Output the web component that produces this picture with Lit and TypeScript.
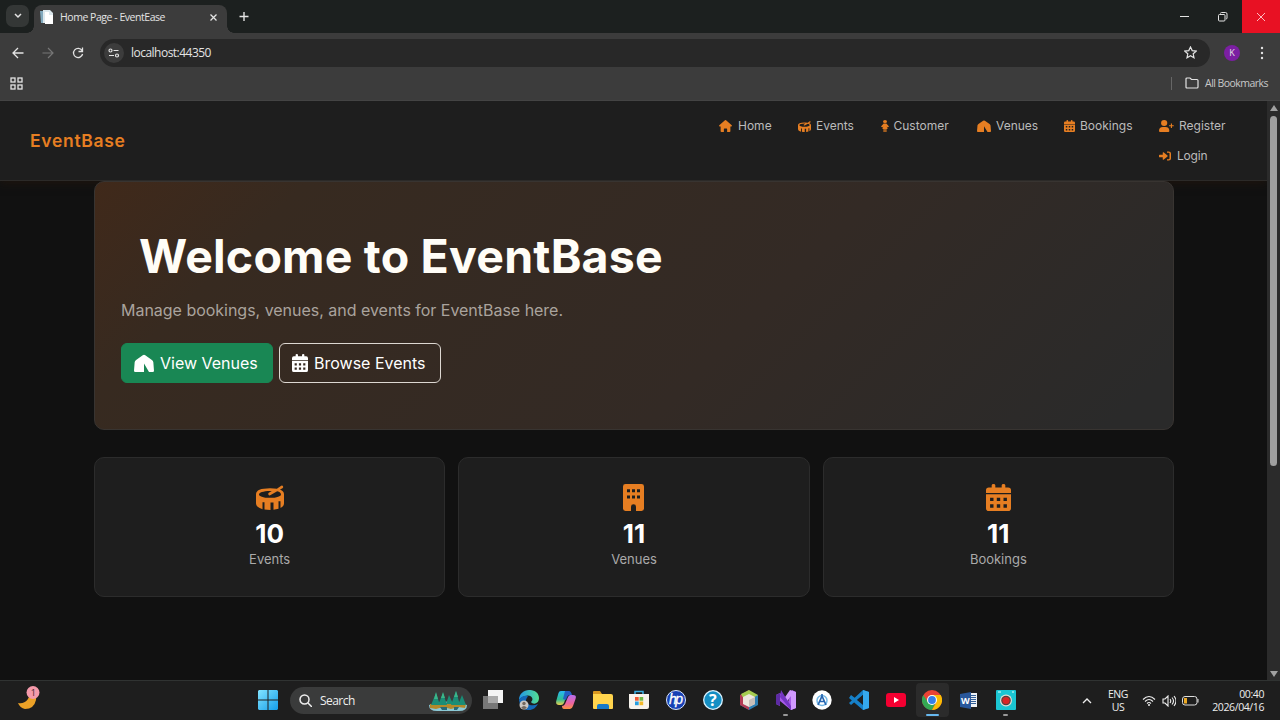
import { LitElement, html, svg, css } from "lit";
import { customElement } from "lit/decorators.js";

const calendar = svg`<path fill-rule="evenodd" d="M5 1q0-1 1.600-1t1.600 1v2h5.600V1q0-1 1.600-1T17 1v2h2.500Q22 3 22 5.500V8H0V5.500Q0 3 2.500 3H5zM0 9h22v12.500q0 2.500-2.500 2.500h-17Q0 24 0 21.500zM3.600 12.200v3h3v-3zM9.500 12.200v3h3v-3zM15.400 12.200v3h3v-3zM3.600 18v3h3v-3zM9.500 18v3h3v-3zM15.400 18v3h3v-3z"/>`;
const tent = svg`<path d="M10.500 1.400q1.500-1 3 0l8 5.900Q23 8.500 23.200 10L24 20.500q0 1.500-1.500 1.500H18L12 11.500V22H1.500Q0 22 0 20.500L.8 10Q1 8.500 2.500 7.300z"/>`;
const drum = svg`<path fill-rule="evenodd" d="M27 1.200a1.300 1.300 0 0 1-.5 1.800l-2.500 1.300q4 1.700 4 4.500v9q0 2.700-3.500 4.300v-6.500h-2v7.300q-2.500.7-5 .9v-7h-3v7.200q-3.500 0-6-.4v-7h-2v6.600Q0 21.500 0 17.800v-9Q0 3 14 3q4 0 6.900.6L25.200.800a1.300 1.300 0 0 1 1.800.4zM14 5.700c-7 0-11 1.700-11 3.300s4 3.300 11 3.300S25 10.600 25 9c0-1.200-1.300-2.200-3.800-2.900l-7 3.800a1.400 1.400 0 0 1-1.400-2.400l3-1.700z"/>`;
const icons: Record<string, [string, unknown]> = {
  home: ["0 0 24 22", svg`<path fill-rule="evenodd" d="M11 .5q1-.8 2 0l10.500 9.300q1 1.200-.5 2.200h-2v8.500q0 1.500-1.500 1.500H15v-5.500q0-1-1-1h-4q-1 0-1 1V22H4.500Q3 22 3 20.500V12H1q-1.500-1-.5-2.200z"/>`],
  drum: ["0 0 28 24", drum],
  person: ["0 0 12 24", svg`<circle cx="6" cy="3" r="3"/><path d="M4 7h4l4 6-2 2-1.500-2L10 18H8.200v6H6.500v-6h-1v6H3.800v-6H2l1.500-5L2 15l-2-2z"/>`],
  tent: ["0 0 24 22", tent],
  calendar: ["0 0 22 24", calendar],
  userplus: ["0 0 29 24", svg`<circle cx="10" cy="6" r="6"/><path d="M7.500 14h5q7.500 0 7.500 8 0 2-2 2H2q-2 0-2-2 0-8 7.500-8zM22.900 7h2.200v3.400h3.400v2.200h-3.400V16h-2.200v-3.400h-3.400v-2.200h3.400z"/>`],
  login: ["0 0 24 22", svg`<path d="M9 3l8 7q1 1 0 2l-8 7q-1.500.5-1.500-1v-4H1.500Q0 14 0 12.500v-3Q0 8 1.500 8h6V4q0-1.500 1.500-1zM16 1h3.500Q24 1 24 5.500v11q0 4.500-4.500 4.500H16v-3h3.500q1.500 0 1.500-1.500v-11Q21 4 19.500 4H16z"/>`],
  building: ["0 0 21 28", svg`<path fill-rule="evenodd" d="M2.500 0h16Q21 0 21 2.500v23q0 2.500-2.500 2.500H13v-4.500a2.500 2.500 0 0 0-5 0V28H2.500Q0 28 0 25.500v-23Q0 0 2.500 0zM4 5.500v3h3v-3zM9 5.500v3h3v-3zM14 5.500v3h3v-3zM4 12v3h3v-3zM9 12v3h3v-3zM14 12v3h3v-3z"/>`],
};
const icon = (name: string, w: number, h: number) =>
  html`<svg width=${w} height=${h} viewBox=${icons[name][0]} preserveAspectRatio="none" fill="currentColor">${icons[name][1]}</svg>`;

@customElement("browser-chrome")
class BrowserChrome extends LitElement {
  static styles = css`
    :host { display: block; height: 101px; font-family: "Open Sans", "Noto Sans", sans-serif; color: #e3e3e3; background: #3c3c3c; }
    svg { display: block; fill: none; stroke: currentColor; flex: none; }
    .strip { height: 33px; display: flex; background: #1c201f; }
    .search { width: 23px; height: 22px; margin: 5px 5px 0 6px; border-radius: 7px; background: #343736; display: grid; place-items: center; }
    .tab { width: 193px; height: 28px; margin-top: 5px; border-radius: 8px 8px 0 0; background: #3c3c3c; display: flex; align-items: center; box-sizing: border-box; padding: 0 10px 4px 6px; position: relative; }
    .tab::before, .tab::after { content: ""; position: absolute; bottom: 0; width: 7px; height: 7px; }
    .tab::before { left: -7px; background: radial-gradient(circle at 0 0, #0000 6.500px, #3c3c3c 7px); }
    .tab::after { right: -7px; background: radial-gradient(circle at 100% 0, #0000 6.500px, #3c3c3c 7px); }
    .title { margin-left: 6px; flex: 1; letter-spacing: -.51px; white-space: nowrap; font: 10.500px "Open Sans", sans-serif; letter-spacing: -.51px; letter-spacing: -.46px; }
    .plus { margin: 11px 0 0 12px; }
    .win { margin-left: auto; display: flex; }
    .win div { display: grid; place-items: center; width: 38px; height: 33px; }
    .win .close { background: #e81123; color: #ffb9bf; }
    .bar { height: 39px; display: flex; align-items: center; }
    .navs { display: flex; gap: 18px; width: 88px; padding-left: 12px; }
    .dim { color: #777; }
    .url { width: 1110px; height: 28px; border-radius: 14px; background: #282828; display: flex; align-items: center; font-size: 12px; box-sizing: border-box; padding: 0 13px 0 4px; letter-spacing: -.52px; }
    .site { width: 20px; height: 20px; border-radius: 50%; background: #3c3c3c; display: grid; place-items: center; margin-right: 7px; }
    .url span { flex: 1; }
    .avatar { width: 16px; height: 16px; border-radius: 50%; background: #7b1fa2; font-size: 9px; display: grid; place-items: center; margin-left: 14px; }
    .dots { margin-left: 20px; fill: currentColor; stroke: none; }
    .marks { height: 29px; border-bottom: 1px solid #444; display: flex; align-items: center; padding: 0 12px 6px 10px; box-sizing: border-box; font-size: 10.500px; }
    .line { width: 1px; height: 13px; background: #666; margin: 0 13px 0 auto; }
    .all { margin-left: 6px; letter-spacing: -.54px; color: #c8c8c8; }
  `;
  render() {
    return html`
      <div class="strip">
        <div class="search"><svg width="8" height="6" stroke-width="1.500"><path d="M1 1l3 3 3-3"/></svg></div>
        <div class="tab">
          <svg width="14" height="14" stroke="none"><path stroke="none" fill="#81a9bd" d="M0 1h4v12H1z"/><path stroke="none" fill="#dce8ed" d="M3 0h7l3 3v10H3z"/><path stroke="none" fill="#fff" d="M5 2h4v3h4v9H5z"/></svg>
          <span class="title">Home Page - EventEase</span>
          <svg width="7" height="7" stroke-width="1.300"><path d="M.5.500l6 6m0-6l-6 6"/></svg>
        </div>
        <svg class="plus" width="10" height="11" stroke-width="1.400"><path d="M5 1v9M.500 5.500h9"/></svg>
        <div class="win">
          <div><svg width="10" height="2"><path d="M0 .5h9"/></svg></div>
          <div><svg width="10" height="10"><rect x=".5" y="2.500" width="6.500" height="6.500" rx="1"/><path d="M2.500 1.500q0-1 1-1h4q1.500 0 1.500 1.500v4q0 1-1 1"/></svg></div>
          <div class="close"><svg width="10" height="10"><path d="M1 1l8 8m0-8l-8 8"/></svg></div>
        </div>
      </div>
      <div class="bar">
        <div class="navs">
          <svg width="12" height="12" stroke-width="1.300"><path d="M11.500 6h-10M6 1L1 6l5 5"/></svg>
          <svg class="dim" width="12" height="12" stroke-width="1.200"><path d="M.500 6h10M6 1l5 5-5 5"/></svg>
          <svg width="12" height="12" stroke-width="1.300"><path d="M10 3.500A4.600 4.600 0 1 0 10.600 7M10.500.500v4h-4"/></svg>
        </div>
        <div class="url">
          <div class="site"><svg width="12" height="10" stroke-width="1.200"><circle cx="2.500" cy="2.500" r="1.500"/><path d="M5.500 2.500h5M1 7.500h5"/><circle cx="9" cy="7.500" r="1.500"/></svg></div>
          <span>localhost:44350</span>
          <svg width="13" height="13" stroke-width="1.200"><path d="M6.500 1l1.700 3.600 4 .5-3 2.700.8 4-3.500-2-3.500 2 .8-4-3-2.700 4-.5z"/></svg>
        </div>
        <div class="avatar">K</div>
        <svg class="dots" width="4" height="14"><circle cx="2" cy="2" r="1.200"/><circle cx="2" cy="7" r="1.200"/><circle cx="2" cy="12" r="1.200"/></svg>
      </div>
      <div class="marks">
        <svg width="13" height="13" stroke-width="1.300"><rect x="1" y="1" width="4" height="4"/><rect x="8" y="1" width="4" height="4"/><rect x="1" y="8" width="4" height="4"/><rect x="8" y="8" width="4" height="4"/></svg>
        <div class="line"></div>
        <svg width="14" height="12" stroke-width="1.200"><path d="M1 2q0-1 1-1h3l1.500 1.500H12q1 0 1 1V10q0 1-1 1H2q-1 0-1-1z"/></svg>
        <span class="all">All Bookmarks</span>
      </div>`;
  }
}

const navItems = [
  { name: "home", label: "Home", col: 79, w: 13, h: 12, gap: 6 },
  { name: "drum", label: "Events", col: 82.500, w: 13, h: 11, gap: 5 },
  { name: "person", label: "Customer", col: 96.500, w: 8, h: 12, gap: 5 },
  { name: "tent", label: "Venues", col: 87, w: 14, h: 12, gap: 5 },
  { name: "calendar", label: "Bookings", col: 95, w: 11, h: 12, gap: 5 },
  { name: "userplus", label: "Register", col: 75, w: 15, h: 12, gap: 5 },
];
const stats = [
  { name: "drum", w: 28, h: 25, n: 10, label: "Events" },
  { name: "building", w: 21, h: 27, n: 11, label: "Venues" },
  { name: "calendar", w: 25, h: 27, n: 11, label: "Bookings" },
];

@customElement("event-page")
class EventPage extends LitElement {
  static styles = css`
    :host { display: flex; height: 579px; font-family: Inter, sans-serif; background: #111; overflow: hidden; }
    svg { display: block; flex: none; }
    .page { width: 1267px; }
    header { height: 80px; box-sizing: border-box; background: #1e1e1e; border-bottom: 1px solid #2c2a28; display: flex; justify-content: space-between; padding-left: 30px; box-shadow: 0 2px 9px #2b180a80; }
    .brand { color: #e67e22; font-size: 17.500px; font-weight: 600; align-self: center; letter-spacing: .7px; }
    nav { display: flex; flex-wrap: wrap; width: 548px; padding-top: 10px; color: #bbb; font-size: 12px; align-content: flex-start; }
    .item { height: 30px; display: flex; align-items: center; }
    .item svg { color: #e67e22; }
    .item span { margin-top: -1px; }
    .login { margin-left: 440px; letter-spacing: -.2px; }
    main { width: 1080px; margin-left: 94px; }
    .hero { height: 249px; box-sizing: border-box; border: 1px solid #383431; border-radius: 10px; background: linear-gradient(135deg, #40291a 0%, #372a20 16%, #332a25 60%, #2a2a2a 95%); padding: 45px 26px 0; }
    h1 { font-size: 46.500px; line-height: 58px; margin: 0 0 0 18px; color: #fffdf7; font-weight: 700; letter-spacing: .2px; }
    p { color: #aaa39d; font-size: 16px; line-height: 24px; margin: 13px 0 21px; letter-spacing: -.02px; }
    .actions { display: flex; gap: 6px; }
    .button { height: 40px; box-sizing: border-box; border: 1px solid #198754; border-radius: 6px; display: flex; align-items: center; color: #fff; font-size: 16px; white-space: nowrap; padding-left: 12px; gap: 6px; background: #198754; width: 152px; }
    .button span { margin-top: -1px; }
    .outline { width: 162px; background: none; border-color: #ddd8d2; }
    .stats { display: grid; grid-template-columns: repeat(3, 1fr); gap: 13px; margin-top: 27px; }
    .card { height: 140px; box-sizing: border-box; background: #1e1e1e; border: 1px solid #2c2c2c; border-radius: 10px; display: flex; flex-direction: column; align-items: center; color: #e67e22; padding-top: 25px; }
    .pic { height: 28px; display: grid; place-items: center; }
    .num { color: #fff; font-size: 26px; font-weight: 700; line-height: 32px; margin-top: 7px; }
    .cap { color: #aaa; font-size: 13px; line-height: 20px; margin-top: -1px; }
    .scroll { width: 13px; background: #2b2b2b; display: flex; flex-direction: column; align-items: center; padding: 4px 0 3px; box-sizing: border-box; color: #a0a0a0; }
    .thumb { width: 7px; height: 350px; border-radius: 4px; background: #9f9f9f; margin: 5px 0 auto; }
  `;
  render() {
    return html`
      <div class="page">
        <header>
          <div class="brand">EventBase</div>
          <nav>
            ${navItems.map((i) => html`<div class="item" style="width:${i.col}px;gap:${i.gap}px">${icon(i.name, i.w, i.h)}<span>${i.label}</span></div>`)}
            <div class="item login" style="gap:6px">${icon("login", 12, 10)}<span>Login</span></div>
          </nav>
        </header>
        <main>
          <section class="hero">
            <h1>Welcome to EventBase</h1>
            <p>Manage bookings, venues, and events for EventBase here.</p>
            <div class="actions">
              <div class="button">${icon("tent", 20, 18)}<span>View Venues</span></div>
              <div class="button outline">${icon("calendar", 16, 18)}<span>Browse Events</span></div>
            </div>
          </section>
          <section class="stats">
            ${stats.map((s) => html`<div class="card"><div class="pic">${icon(s.name, s.w, s.h)}</div><div class="num">${s.n}</div><div class="cap">${s.label}</div></div>`)}
          </section>
        </main>
      </div>
      <div class="scroll">
        <svg width="8" height="6" fill="currentColor"><path d="M4 0l4 6H0z"/></svg>
        <div class="thumb"></div>
        <svg width="8" height="6" fill="currentColor"><path d="M4 6l4-6H0z"/></svg>
      </div>`;
  }
}

const apps = [
  svg`<path fill="#f4f4f4" d="M5 0h15v13H5z"/><path fill="#777" d="M0 6h15v13H0z"/><path fill="#aaa" d="M5 6h10v7H5z"/>`,
  svg`<defs><linearGradient id="edge"><stop stop-color="#2197e8"/><stop offset="1" stop-color="#54df91"/></linearGradient></defs><path fill="url(#edge)" d="M0 10C0-3 20-3 20 8c0 6-6 7-8 4 4-4-1-8-6-6-3 1-5 2-6 4z"/><path fill="#1468b8" d="M0 10Q3 5 9 6q-5 7 2 9 4 1 8-1-4 7-11 6-7-1-8-10z"/><circle cx="5" cy="15" r="4.500" fill="#cbc7c2"/><circle cx="5" cy="13.500" r="1.700" fill="#746960"/><path d="M2 18q3-4 6 0-3 2-6 0" fill="#746960"/>`,
  svg`<defs><linearGradient id="cp" x2="0" y2="1"><stop stop-color="#28b7f5"/><stop offset=".6" stop-color="#31bd93"/><stop offset="1" stop-color="#eed04d"/></linearGradient><linearGradient id="cq" x2="0" y2="1"><stop stop-color="#b66dee"/><stop offset=".6" stop-color="#ed649d"/><stop offset="1" stop-color="#fa923f"/></linearGradient></defs><path fill="url(#cp)" d="M5 1h7l-4 12q-1 2-3 2H3q-4 0-2.500-5l2-7Q3 1 5 1z"/><path fill="url(#cq)" d="M14.500 5H17q4 0 2.500 4L17 16q-1 3-3 3H8q-2 0-2-3 2 0 3-2l3-7q1-2 2.500-2z"/><path fill="#245fc5" d="M9 1h4q2 0 3 4h-2q-2 0-3 2l-1 3-3-1z"/>`,
  svg`<path fill="#d99820" d="M0 2q0-1 1-1h6l2 3v4H0z"/><path fill="#ffd44d" d="M0 4h18q2 0 2 2v12q0 1-1 1H1q-1 0-1-1z"/><path fill="#1679c9" d="M4 19v-3q0-2 2-2h8q2 0 2 2v3z"/>`,
  svg`<path d="M6 5V1.500h8V5" stroke="#3aaee3" stroke-width="1.500" fill="none"/><path fill="#f7f3ed" d="M0 4h20v13q0 2-2 2H2q-2 0-2-2z"/><path fill="#ef5a35" d="M6 7h3.700v3.700H6z"/><path fill="#70b943" d="M10.500 7h3.700v3.700h-3.700z"/><path fill="#289ee1" d="M6 11.500h3.700v3.700H6z"/><path fill="#f4b928" d="M10.500 11.500h3.700v3.700h-3.700z"/>`,
  svg`<circle cx="10" cy="10" r="9.500" fill="#1741b5" stroke="#dae6ff"/><text x="3" y="14" font-family="Liberation Sans" font-size="14" font-style="italic" fill="#fff" stroke="#fff" stroke-width=".3" textLength="14">hp</text>`,
  svg`<circle cx="10" cy="10" r="9.300" fill="#158fc4" stroke="#d9f2ff" stroke-width="1.300"/><text x="6" y="15.500" font-family="Open Sans" font-weight="700" font-size="16" fill="#fff">?</text>`,
  svg`<path fill="#b33b55" d="M1 5l9-5v10l-9 5z"/><path fill="#a6cc50" d="M2 4l8-4 9 5v5l-9 2V6L4 8z"/><path fill="#2d7db1" d="M1 15l9-5 9-5v10l-9 5z"/><path fill="#b33b55" d="M1 5l4 3v6l5 3v3l-9-5z"/><path fill="#eee6dd" d="M4 7l6-3 6 3v7l-6 3-6-3z"/><path fill="#c8bfb9" d="M10 10l6-3v7l-6 3z"/>`,
  svg`<path fill="#a85be8" d="M0 5l4-2 8 9 4-12 4 2v16l-5 2L4 11v5l-4-2z"/><path fill="#5d2ba3" d="M0 5l4-2v13l-4-2z"/><path fill="#d199ff" d="M14 0l6 2v16l-5 2V6l-5 7-3-3z"/><path fill="#7435c3" d="M5 0l10 16v4L4 7z"/>`,
  svg`<circle cx="10" cy="10" r="9.700" fill="#fff"/><circle cx="10" cy="10.500" r="5" fill="none" stroke="#75b8e5" stroke-width="1.500"/><path d="M10 4v2L6 15m4-9l4 9M7 11.500h6" fill="none" stroke="#2867b2" stroke-width="1.700"/>`,
  svg`<path fill="#1680c8" d="M14 0l6 2v16l-6 2L0 8l2-3 12 9V5L2 15l-2-2z"/><path fill="#35a9ed" d="M14 0l6 2v16l-6 2z"/><path fill="#1e1e1e" d="M14 5v10L8 10z"/>`,
  svg`<rect y="3" width="20" height="14" rx="3" fill="#f40031"/><path fill="#fff" d="M8 7l5 3-5 3z"/>`,
  svg`<circle cx="10" cy="10" r="10" fill="#ea4335"/><path fill="#34a853" d="M1.300 5A10 10 0 0 0 10 20l4-8H6z"/><path fill="#fbbc04" d="M10 20A10 10 0 0 0 18.700 5H10l4.300 7.500z"/><circle cx="10" cy="10" r="5" fill="#fff"/><circle cx="10" cy="10" r="3.900" fill="#377fe8"/>`,
  svg`<path fill="#eef1f5" d="M8 3h10v14H8z"/><path stroke="#335f96" d="M12 5.500h5m-5 2h5m-5 2h5m-5 2h5m-5 2h5"/><path fill="#29579b" d="M1 4l11-2v17L1 17z"/><text x="2" y="13.500" font-family="Open Sans" font-size="9" font-weight="700" fill="#fff">W</text>`,
  svg`<rect width="20" height="20" rx="1" fill="#1bc5d2"/><circle cx="10" cy="10.500" r="6" fill="#e9dcd4"/><circle cx="10" cy="10.500" r="4.800" fill="#53413f"/><circle cx="10" cy="10.500" r="3.600" fill="#d92525"/><path stroke="#e6ffff" d="M2 2h3m11 0h2"/>`,
];

@customElement("task-bar")
class TaskBar extends LitElement {
  static styles = css`
    :host { display: flex; height: 40px; box-sizing: border-box; background: #1e1e1e; border-top: 1px solid #303332; color: #eee; font: 10.500px "Open Sans", sans-serif; }
    svg { display: block; flex: none; }
    .weather { width: 258px; padding: 4px 0 0 17px; box-sizing: border-box; }
    .start { padding-top: 9px; width: 32px; }
    .search { width: 182px; height: 27px; border-radius: 14px; background: #3a3b3b; margin-top: 6px; display: flex; align-items: center; box-sizing: border-box; padding: 0 4px 0 9px; }
    .search span { flex: 1; margin-left: 8px; font-size: 12px; letter-spacing: -.55px; }
    .apps { display: grid; grid-template-columns: repeat(15, 36.640px); margin-left: 2.500px; }
    .app { display: grid; justify-items: center; align-content: start; padding-top: 9px; position: relative; }
    .active::before { content: ""; position: absolute; inset: 2px 2px 3px; border-radius: 4px; background: #2b2b2b; }
    .app svg { position: relative; }
    .run::after { content: ""; position: absolute; bottom: 4px; width: 5px; height: 2px; border-radius: 2px; background: #999; }
    .active::after { width: 13px; background: #67b8ee; }
    .tray { margin-left: auto; display: flex; align-items: center; padding-right: 16px; }
    .lang { text-align: center; line-height: 13px; margin: 0 12px 0 14px; font-size: 10.500px; width: 24px; letter-spacing: -.4px; }
    .icons { display: flex; align-items: center; gap: 6px; }
    .clock { text-align: right; line-height: 13px; width: 65px; letter-spacing: -.4px; }
  `;
  render() {
    return html`
      <div class="weather"><svg width="25" height="26"><path fill="#eba127" d="M14 4q7 3 5 11-2 9-11 9-5-1-7-6 11 2 13-14z"/><circle cx="16" cy="7.500" r="6.500" fill="#f59aab"/><text x="13.800" y="11" font-size="9" fill="#442329">1</text></svg></div>
      <div class="start"><svg width="20" height="20"><defs><linearGradient id="win" x1="0" y1="0" x2="20" y2="20" gradientUnits="userSpaceOnUse"><stop stop-color="#83e4ff"/><stop offset="1" stop-color="#139de9"/></linearGradient></defs><path fill="url(#win)" d="M1 0h8.500v9.500H0V1zm9.500 0H19l1 1v8.500h-9.500zM0 10.500h9.500V20H1l-1-1zm10.500 0H20V19l-1 1h-8.500z"/></svg></div>
      <div class="search">
        <svg width="13" height="13" fill="none" stroke="#eee" stroke-width="1.500"><circle cx="5.500" cy="5.500" r="4.500"/><path d="M9 9l4 4"/></svg><span>Search</span>
        <svg width="40" height="22"><path fill="#8bc9d6" d="M1 15q19-7 38 0 0 6-8 6H9q-8 0-8-6z"/><path fill="#b1892a" d="M2 14h36l-1 4-7-1-7 2-8-2-7 2-6-1z"/><path fill="#1a8d76" d="M3 15L8 3l4 12zM10 15l5-12 4 12zM18 14l3-9 4 9zM23 15l5-14 4 14zM30 15l4-10 4 10z"/><path fill="#3bb58a" d="M6 9l2-7 2 7zM13 8l2-6 2 6zM26 7l2-6 2 6z"/><path fill="#276976" d="M12 17h7v3h-5zm14 0h5l-2 3h-3z"/></svg>
      </div>
      <div class="apps">${apps.map((a, i) => html`<div class="app ${i === 12 ? "active run" : i === 8 || i === 14 ? "run" : ""}"><svg width="20" height="20">${a}</svg></div>`)}</div>
      <div class="tray">
        <svg width="10" height="6" fill="none" stroke="#eee" stroke-width="1.300"><path d="M1 5l4-4 4 4"/></svg>
        <div class="lang">ENG<br>US</div>
        <div class="icons">
          <svg width="14" height="12" fill="none" stroke="#eee" stroke-width="1.100"><path d="M1 4.500q6-6 12 0M3 6.500q4-4 8 0M5 8.500q2-2 4 0"/><circle cx="7" cy="10" r="1" fill="#eee" stroke="none"/></svg>
          <svg width="14" height="12" fill="none" stroke="#eee" stroke-width="1.100"><path d="M1 4h2l3-3v10L3 8H1zM8 4q1.500 2 0 4M10 2.500q3 3.500 0 7M12 1q4 5 0 10"/></svg>
          <svg width="17" height="10" fill="none" stroke="#ddd"><rect x=".5" y=".5" width="14.500" height="8.500" rx="2.500"/><path d="M16 3v3.500"/><path fill="#edaa24" stroke="none" d="M2 2h3v5.500H2z"/></svg>
        </div>
        <div class="clock">00:40<br>2026/04/16</div>
      </div>`;
  }
}

@customElement("app-root")
class AppRoot extends LitElement {
  static styles = css`:host { display: block; width: 1280px; height: 720px; overflow: hidden; background: #111; }`;
  render() {
    return html`<browser-chrome></browser-chrome><event-page></event-page><task-bar></task-bar>`;
  }
}
